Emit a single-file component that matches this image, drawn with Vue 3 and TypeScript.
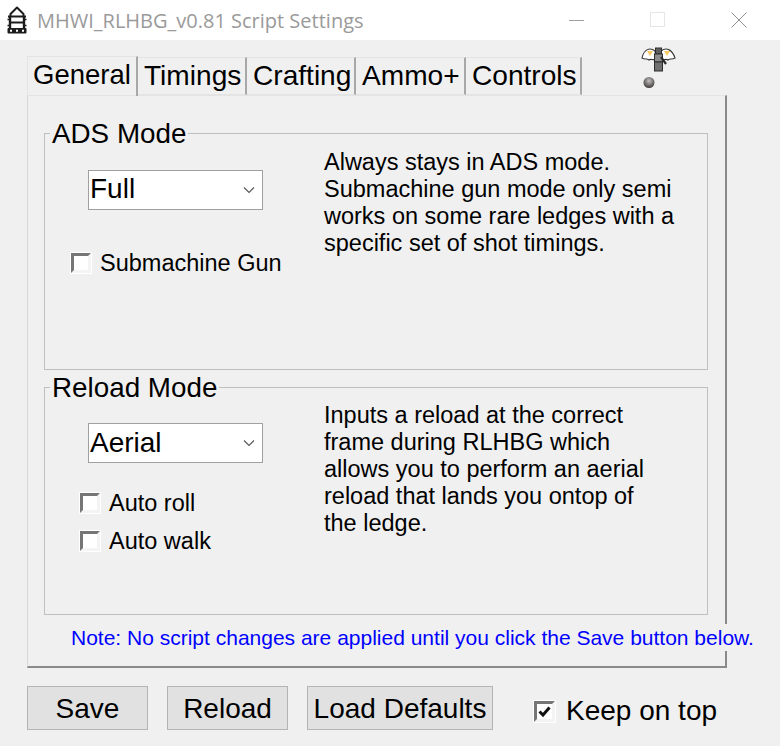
<template>
  <div class="window">
    <header class="titlebar">
      <svg class="app-icon" width="20" height="28" viewBox="0 0 20 28">
        <path d="M3.5 10 V8 L10 1.5 L16.5 8 V10" fill="none" stroke="#1c1c1c" stroke-width="2" stroke-linejoin="round" />
        <path d="M1 10.5 H19 M3 16.5 H17" stroke="#1c1c1c" stroke-width="1.8" />
        <path d="M3 10 V23 M17 10 V23" stroke="#1c1c1c" stroke-width="2.4" />
        <path d="M0.5 13.5 H2 M0.5 19.5 H2 M18 13.5 H19.5 M18 19.5 H19.5" stroke="#1c1c1c" stroke-width="1.6" />
        <rect x="0.5" y="22" width="19" height="5.5" rx="1" fill="#1c1c1c" />
        <path d="M3 24.8 H17" stroke="#fff" stroke-width="2" stroke-dasharray="2 4" />
      </svg>
      <span class="title">MHWI_RLHBG_v0.81 Script Settings</span>
      <div class="caption-buttons">
        <svg width="16" height="16" viewBox="0 0 16 16"><path d="M0 8.5 H15" stroke="#a0a0a0" /></svg>
        <svg width="16" height="16" viewBox="0 0 16 16"><rect x="0.5" y="0.5" width="14" height="14" fill="none" stroke="#e6e6e6" /></svg>
        <svg width="16" height="16" viewBox="0 0 16 16"><path d="M0.5 0.5 L15.5 15.5 M15.5 0.5 L0.5 15.5" stroke="#909090" /></svg>
      </div>
    </header>

    <main class="content">
      <div class="tabs-row">
        <div class="tabs">
          <div v-for="(tab, i) in tabs" :key="tab" class="tab" :class="{ active: i === 0 }">{{ tab }}</div>
        </div>
        <svg class="mascot" width="38" height="44" viewBox="0 0 38 44">
          <path d="M15 5 C10 1 4 3 2 12 C5 14 7 12 9 14 C11 12 13 15 16 13 Z" fill="#fff" stroke="#3a3a3a" stroke-width="1.1" />
          <path d="M21 5 C26 1 32 3 35 12 C32 14 30 12 28 14 C26 12 24 15 21 13 Z" fill="#fff" stroke="#3a3a3a" stroke-width="1.1" />
          <path d="M7 5 H13 L10 10 Z M24 5 H30 L27 10 Z" fill="#f9c860" />
          <rect x="15.5" y="2" width="6" height="6" fill="#5e5e5e" stroke="#2c2c2c" />
          <rect x="14.5" y="8" width="8" height="8" fill="#8a8a8a" stroke="#2c2c2c" />
          <rect x="14.5" y="16" width="8" height="9" fill="#707070" stroke="#2c2c2c" />
          <path d="M21 11 L26 18" stroke="#2c2c2c" stroke-width="2.2" />
          <defs>
            <radialGradient id="ball" cx="0.5" cy="0.35" r="0.7">
              <stop offset="0" stop-color="#c4c0c0" />
              <stop offset="1" stop-color="#353131" />
            </radialGradient>
          </defs>
          <circle cx="9" cy="36.5" r="5.5" fill="url(#ball)" />
        </svg>
      </div>

      <div class="panel">
        <fieldset v-for="group in groups" :key="group.legend" class="group" :class="group.cls">
          <legend><span>{{ group.legend }}</span></legend>
          <div class="group-left">
            <div class="select">
              <span>{{ group.value }}</span>
              <svg width="12" height="8" viewBox="0 0 12 8"><path d="M1 1.5 L6 6.5 L11 1.5" fill="none" stroke="#555" stroke-width="1.1" /></svg>
            </div>
            <div class="checks">
              <label v-for="check in group.checks" :key="check" class="check">
                <span class="box"></span>{{ check }}
              </label>
            </div>
          </div>
          <p class="desc">
            <span v-for="line in group.lines" :key="line">{{ line }}</span>
          </p>
        </fieldset>
        <div class="note">Note: No script changes are applied until you click the Save button below.</div>
      </div>

      <footer class="actions">
        <button class="btn save">Save</button>
        <button class="btn reload">Reload</button>
        <button class="btn defaults">Load Defaults</button>
        <label class="keep">
          <span class="box checked">
            <svg width="13" height="11" viewBox="0 0 13 11"><path d="M1.5 5.5 L5 9 L11.5 1.5" fill="none" stroke="#111" stroke-width="3" /></svg>
          </span>
          Keep on top
        </label>
      </footer>
    </main>
  </div>
</template>

<script setup lang="ts">
const tabs = ['General', 'Timings', 'Crafting', 'Ammo+', 'Controls']

const groups = [
  {
    legend: 'ADS Mode',
    cls: 'ads',
    value: 'Full',
    checks: ['Submachine Gun'],
    lines: [
      'Always stays in ADS mode.',
      'Submachine gun mode only semi',
      'works on some rare ledges with a',
      'specific set of shot timings.',
    ],
  },
  {
    legend: 'Reload Mode',
    cls: 'reload-group',
    value: 'Aerial',
    checks: ['Auto roll', 'Auto walk'],
    lines: [
      'Inputs a reload at the correct',
      'frame during RLHBG which',
      'allows you to perform an aerial',
      'reload that lands you ontop of',
      'the ledge.',
    ],
  },
]
</script>

<style>
html,
body {
  margin: 0;
  background: #f0f0f0;
}
</style>

<style scoped>
.window {
  width: 780px;
  height: 746px;
  overflow: hidden;
  background: #f0f0f0;
  color: #000;
  font-family: "Liberation Sans", Arial, sans-serif;
}

.titlebar {
  height: 40px;
  background: #fff;
  display: flex;
  align-items: center;
  padding-left: 7px;
  box-sizing: border-box;
}

.app-icon {
  flex: none;
}

.title {
  margin-left: 10px;
  font-family: "Open Sans", sans-serif;
  font-size: 20px;
  color: #9a9a9a;
  white-space: nowrap;
}

.caption-buttons {
  margin-left: auto;
  display: flex;
  gap: 65px;
  padding-right: 33px;
}

.content {
  padding: 17px 0 0 27px;
}

.tabs-row {
  display: flex;
  width: 699px;
  height: 38px;
  position: relative;
}

.tabs {
  display: flex;
}

.tab {
  width: 109px;
  height: 38px;
  box-sizing: border-box;
  padding-left: 6px;
  font-size: 28.1px;
  line-height: 35px;
  border-right: 2px solid #a8a8a8;
  border-top: 1px solid #e4e4e4;
  border-bottom: 1px solid #e4e4e4;
  white-space: nowrap;
}

.tab:nth-child(4) {
  width: 110px;
}

.tab:last-child {
  width: 116px;
}

.tab.active {
  width: 111px;
  font-size: 27.5px;
  border-left: 1px solid #e4e4e4;
  border-bottom: 0;
  padding-left: 5px;
  position: relative;
  top: -1px;
  height: 40px;
}

/* sits in the empty corner right of the tabs */
.mascot {
  position: absolute;
  left: 613px;
  top: -11px;
}

.panel {
  width: 700px;
  height: 573px;
  box-sizing: border-box;
  border-top: 1px solid #e4e4e4;
  border-left: 1px solid #d8d8d8;
  border-right: 2px solid #8a8a8a;
  border-bottom: 2px solid #8a8a8a;
  padding: 22px 17px 0 16px;
}

.group {
  margin: 0;
  padding: 0;
  box-sizing: border-box;
  width: 664px;
  border: 1px solid #bfbfbf;
  display: flex;
  min-inline-size: 0;
}

.group.ads {
  height: 252px;
}

.group.reload-group {
  height: 243px;
  margin-top: 2px;
}

legend {
  margin-left: 5px;
  padding: 0 2px;
  font-size: 27.8px;
  line-height: 30px;
}

legend span {
  position: relative;
  top: 1px;
}

.group-left {
  width: 279px;
  flex: none;
  box-sizing: border-box;
}

.select {
  margin: 22px 0 0 43px;
  width: 175px;
  height: 40px;
  box-sizing: border-box;
  background: #fff;
  border: 1px solid #a0a0a0;
  display: flex;
  align-items: center;
  justify-content: space-between;
  padding: 0 7px 0 1px;
  font-size: 28px;
}

.select span {
  margin-top: -3px;
}

.reload-group .select {
  margin-top: 21px;
}

.reload-group .select span {
  margin-top: -1px;
}

.checks {
  display: flex;
  flex-direction: column;
  gap: 12px;
  margin-top: 40px;
}

.reload-group .checks {
  margin-top: 27px;
}

.check {
  display: flex;
  align-items: center;
  font-size: 23.5px;
  line-height: 26px;
}

.box {
  width: 20px;
  height: 20px;
  box-sizing: border-box;
  flex: none;
  background: #fff;
  border: 3px solid;
  border-color: #767676 #f4f4f4 #f4f4f4 #767676;
  outline: 1px solid #fff;
  display: flex;
  align-items: center;
  justify-content: center;
}

.ads .check {
  margin-left: 26px;
}

.reload-group .check {
  margin-left: 35px;
}

.check .box {
  margin-right: 9px;
}

.desc {
  margin: 1px 0 0;
  font-size: 23.5px;
  line-height: 27px;
}

.reload-group .desc {
  margin-top: 0;
}

.desc span {
  display: block;
  white-space: nowrap;
}

.note {
  position: relative;
  margin: 9px 0 0 27px;
  width: 690px;
  height: 27px;
  background: #f0f0f0;
  color: #0000ff;
  font-size: 21px;
  line-height: 27px;
  white-space: nowrap;
}

.actions {
  display: flex;
  align-items: flex-start;
  margin-top: 18px;
}

.btn {
  height: 44px;
  box-sizing: border-box;
  padding: 2px 0 0;
  background: #e1e1e1;
  border: 1px solid #b4b4b4;
  font-family: inherit;
  font-size: 28px;
  color: #000;
}

.save {
  width: 121px;
}

.reload {
  width: 121px;
  margin-left: 19px;
}

.defaults {
  width: 186px;
  margin-left: 19px;
}

.keep {
  display: flex;
  align-items: center;
  margin: 7px 0 0 41px;
  font-size: 28px;
  line-height: 36px;
}

.keep .box {
  margin-right: 11px;
  width: 21px;
  height: 21px;
}
</style>
